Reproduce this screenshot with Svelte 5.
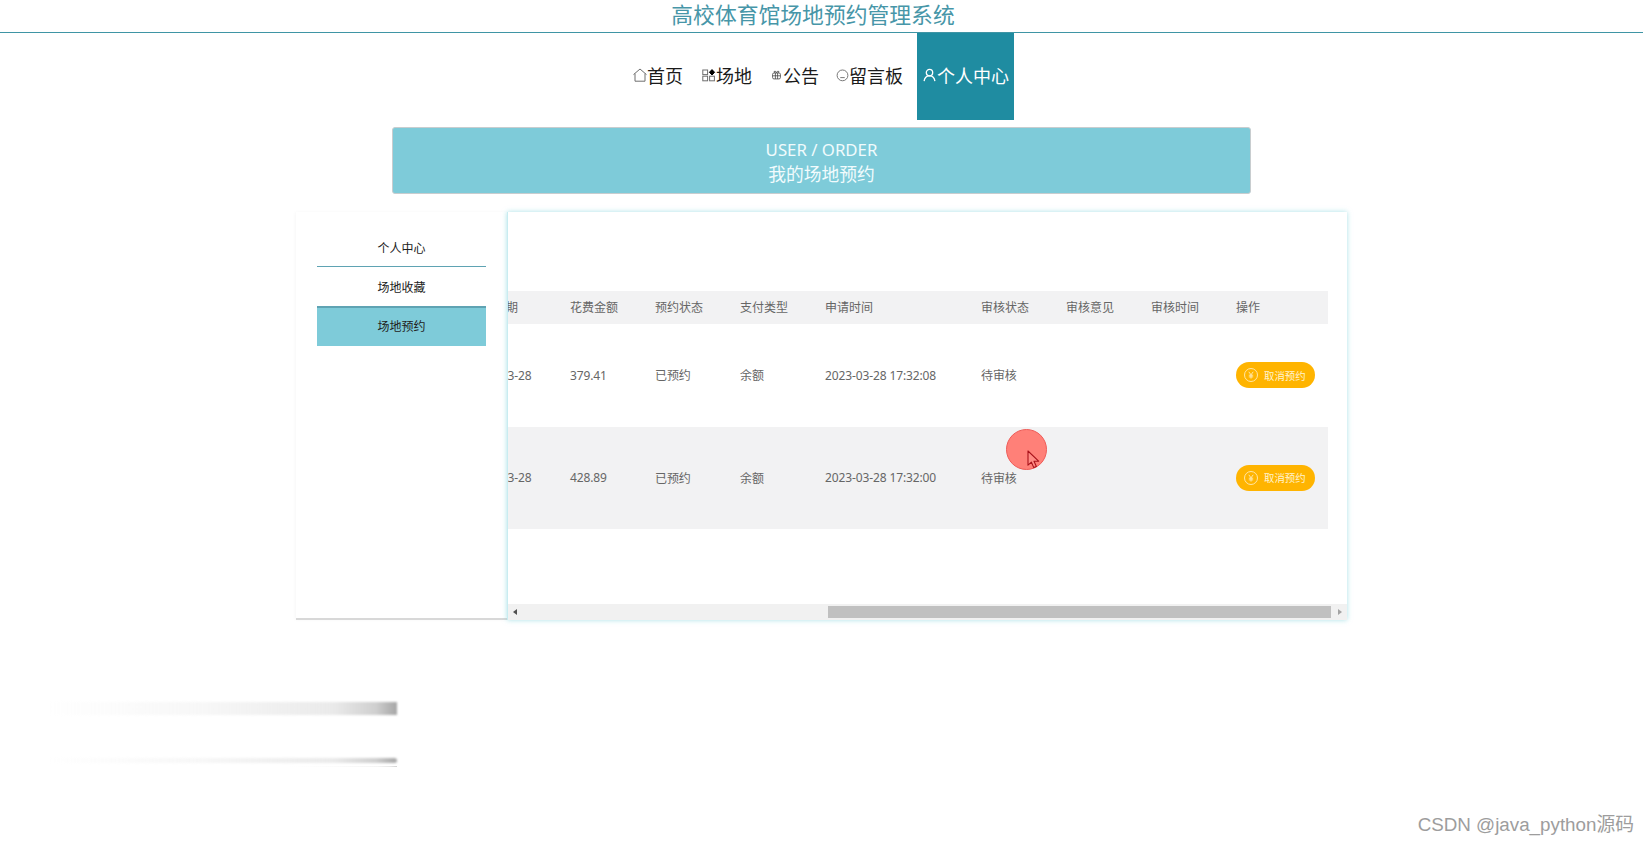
<script>
    const navItems = [
        { key: 'home', label: '首页' },
        { key: 'venue', label: '场地' },
        { key: 'notice', label: '公告' },
        { key: 'board', label: '留言板' },
        { key: 'user', label: '个人中心', active: true }
    ];

    const sideItems = [
        { label: '个人中心' },
        { label: '场地收藏' },
        { label: '场地预约', active: true }
    ];

    const columns = ['预约日期', '花费金额', '预约状态', '支付类型', '申请时间', '审核状态', '审核意见', '审核时间', '操作'];

    const rows = [
        { date: '2023-03-28', cost: '379.41', state: '已预约', pay: '余额', time: '2023-03-28 17:32:08', audit: '待审核' },
        { date: '2023-03-28', cost: '428.89', state: '已预约', pay: '余额', time: '2023-03-28 17:32:00', audit: '待审核' }
    ];
</script>

<div class="page">
    <header class="title">高校体育馆场地预约管理系统</header>

    <nav class="nav">
        {#each navItems as item}
            <a class="nav-item {item.key}" class:active={item.active} href="#top">
                <svg class="nav-icon" viewBox="0 0 14 14" fill="none" stroke="currentColor" stroke-width="1">
                    {#if item.key === 'home'}
                        <path d="M.5 6.6 7 1l6.5 5.6M2 5.6v7.6h10V5.6" />
                    {:else if item.key === 'venue'}
                        <rect x=".8" y="2" width="4.8" height="4.6" />
                        <rect x=".8" y="8.2" width="4.8" height="4.6" />
                        <rect x="7.6" y="8.2" width="4.8" height="4.6" />
                        <path class="solid" d="M10 1.6 12.6 4.3 10 7 7.4 4.3z" />
                    {:else if item.key === 'notice'}
                        <rect x="2" y="4.4" width="10" height="7.6" rx="1.8" />
                        <path d="M2 8h10M5.6 4.4v7.6M8.4 4.4v7.6M4.6 4.2 4 2.4h2l1 1.8 1-1.8h2l-.6 1.8" />
                    {:else if item.key === 'board'}
                        <circle cx="7" cy="7.4" r="5.8" />
                        <path d="M4.6 9.8h4.8" />
                    {:else}
                        <circle cx="7" cy="4.6" r="3.2" />
                        <path d="M1.6 13.2c.4-3.2 2.4-5.4 5.4-5.4s5 2.2 5.4 5.4" />
                    {/if}
                </svg>
                <span>{item.label}</span>
            </a>
        {/each}
    </nav>

    <section class="banner">
        <div class="banner-en">USER / ORDER</div>
        <div class="banner-cn">我的场地预约</div>
    </section>

    <main class="body">
        <aside class="side">
            {#each sideItems as item}
                <a class="side-item" class:active={item.active} href="#top">{item.label}</a>
            {/each}
        </aside>

        <section class="panel">
            <div class="scroller">
                <table>
                    <colgroup>
                        <col class="c-date" />
                        <col class="c-std" />
                        <col class="c-std" />
                        <col class="c-std" />
                        <col class="c-time" />
                        <col class="c-std" />
                        <col class="c-std" />
                        <col class="c-std" />
                        <col class="c-act" />
                    </colgroup>
                    <thead>
                        <tr>
                            {#each columns as col}
                                <th>{col}</th>
                            {/each}
                        </tr>
                    </thead>
                    <tbody>
                        {#each rows as row}
                            <tr>
                                <td>{row.date}</td>
                                <td>{row.cost}</td>
                                <td>{row.state}</td>
                                <td>{row.pay}</td>
                                <td>{row.time}</td>
                                <td>{row.audit}</td>
                                <td></td>
                                <td></td>
                                <td>
                                    <button class="cancel" type="button">
                                        <svg viewBox="0 0 14 14" fill="none" stroke="currentColor" stroke-width=".8">
                                            <circle cx="7" cy="7" r="6.5" />
                                            <path d="M4.8 3.8 7 6.8l2.2-3M7 6.8v3.8M4.8 7.2h4.4M4.8 8.9h4.4" />
                                        </svg>
                                        <span>取消预约</span>
                                    </button>
                                </td>
                            </tr>
                        {/each}
                    </tbody>
                </table>
            </div>

            <div class="scrollbar">
                <span class="arrow left"></span>
                <div class="track"><div class="thumb"></div></div>
                <span class="arrow right"></span>
            </div>
        </section>
    </main>

    <div class="streaks">
        <div class="streak one"></div>
        <div class="streak two"></div>
        <div class="streak three"></div>
    </div>
</div>

<div class="pointer">
    <svg viewBox="0 0 14 19" width="14" height="19">
        <path d="M1 1v14.2l3.4-3 2.4 5.4 2.6-1.2-2.4-5.2h4.6z" fill="#ff8b84" stroke="#a8121a" stroke-width="1.1" stroke-linejoin="round" />
    </svg>
</div>

<div class="watermark">CSDN @java_python源码</div>

<style>
    :global(body) {
        background: #fff;
        overflow: hidden;
    }

    .page {
        width: 1643px;
        height: 844px;
        font-family: "Noto Sans", "Noto Sans CJK SC", sans-serif;
    }

    .title {
        height: 32px;
        padding-right: 17px;
        border-bottom: 1px solid #3f95a5;
        font-size: 21.8px;
        line-height: 30px;
        text-align: center;
        color: #4796a8;
    }

    .nav {
        height: 87px;
        padding-right: 1px;
        display: flex;
        justify-content: center;
        gap: 10px;
    }

    .nav-item {
        padding: 0 4px 4px 5px;
        display: flex;
        align-items: center;
        font-size: 18px;
        color: #1a1a1a;
        text-decoration: none;
    }

    .nav-item.notice .nav-icon {
        width: 11px;
        margin-right: 1px;
        color: #444;
    }

    .nav-item.board {
        margin-left: -2px;
    }

    .nav-item.board .nav-icon {
        width: 13px;
    }

    .nav-item.active {
        padding-right: 5px;
        background: #1f8ca1;
        color: #fff;
    }

    .nav-icon {
        width: 14px;
        height: 14px;
        flex: none;
        color: #6e6e6e;
    }

    .nav-item.active .nav-icon {
        width: 15px;
        color: #fff;
        stroke-width: 1.3;
    }

    .solid {
        fill: #000;
        stroke: #000;
    }

    .banner {
        width: 859px;
        height: 67px;
        margin: 7px auto 0;
        box-sizing: border-box;
        padding-top: 10px;
        border: 1px solid #c8cdcf;
        border-radius: 3px;
        background: #7ecbd9;
        color: #f1fbfd;
        text-align: center;
        font-size: 16.8px;
        line-height: 24px;
    }

    .banner-cn {
        font-size: 17.8px;
    }

    .body {
        width: 1051px;
        height: 408px;
        margin: 18px auto 0;
        display: flex;
    }

    .side {
        width: 211px;
        flex: none;
        box-sizing: border-box;
        padding: 8px 21px 0;
        background: #fff;
        border-bottom: 2px solid #d8d8d8;
        box-shadow: -1px 0 3px rgba(0, 0, 0, 0.03);
    }

    .side-item {
        display: block;
        height: 38px;
        line-height: 40px;
        margin-bottom: 1px;
        border-bottom: 1px solid #5fa3b3;
        font-size: 12px;
        text-align: center;
        color: #222;
        text-decoration: none;
    }

    .side-item:first-child {
        padding-top: 8px;
        line-height: 41px;
    }

    .side-item.active {
        height: 38px;
        line-height: 38px;
        border-top: 1px solid #5fa3b3;
        border-bottom: 0;
        margin-top: -1px;
        background: #7ecbd9;
    }

    .panel {
        flex: 1;
        min-width: 0;
        display: flex;
        flex-direction: column;
        box-sizing: border-box;
        border-left: 1px solid #c8ecf1;
        box-shadow: 0 0 5px rgba(110, 205, 215, 0.6);
        background: #fff;
    }

    .scroller {
        flex: 1;
        overflow: hidden;
        padding-top: 79px;
    }

    table {
        width: 858px;
        margin-left: -38px;
        border-collapse: collapse;
        table-layout: fixed;
        font-size: 12px;
        color: #666;
    }

    .c-date { width: 100px; }
    .c-std { width: 85px; }
    .c-time { width: 156px; }
    .c-act { width: 92px; }

    th {
        height: 31px;
        padding: 0 0 2px;
        background: #f2f2f3;
        font-weight: 400;
        text-align: left;
    }

    td {
        height: 102.5px;
        padding: 0;
        letter-spacing: -0.12px;
    }

    tbody tr:nth-child(even) td {
        background: #f2f2f3;
    }

    .cancel {
        width: 79px;
        height: 26px;
        padding: 0 0 0 8px;
        display: flex;
        align-items: center;
        gap: 6px;
        border: 0;
        border-radius: 13px;
        background: #ffb400;
        color: #fff3cf;
        font: inherit;
        font-size: 10.4px;
    }

    .cancel svg {
        width: 14px;
        height: 14px;
        flex: none;
    }

    .cancel span {
        white-space: nowrap;
    }

    .scrollbar {
        height: 16px;
        flex: none;
        display: flex;
        background: #f1f1f1;
    }

    .arrow {
        width: 16px;
        flex: none;
        position: relative;
    }

    .arrow::after {
        content: "";
        position: absolute;
        top: 5px;
        border: 3px solid transparent;
    }

    .arrow.left::after {
        left: 2px;
        border-right: 4px solid #505050;
    }

    .arrow.right::after {
        left: 7px;
        border-left: 4px solid #a3a3a3;
    }

    .track {
        flex: 1;
        display: flex;
        justify-content: flex-end;
        align-items: center;
    }

    .thumb {
        width: 503px;
        height: 12px;
        background: #c0c0c0;
    }

    .streaks {
        margin: 82px 0 0 47px;
        width: 350px;
    }

    .streak {
        background: linear-gradient(90deg, rgba(255, 255, 255, 0), rgba(245, 245, 245, 0.8) 45%, #eaeaea 82%, #cfcfcf 94%, #a6a6a6 100%);
    }

    .streak.one {
        height: 13px;
        filter: blur(1px);
    }

    .streak.two {
        height: 5px;
        margin-top: 43px;
        border-radius: 0 4px 4px 0;
        filter: blur(1px);
    }

    .streak.three {
        width: 110px;
        height: 1px;
        margin: 3px 0 0 240px;
        opacity: 0.5;
    }

    .pointer {
        position: absolute;
        left: 1005.5px;
        top: 429px;
        width: 41px;
        height: 41px;
        box-sizing: border-box;
        padding: 20px 0 0 20px;
        border-radius: 50%;
        border: 1px solid #ee5c58;
        background: #ff8078;
    }

    .pointer svg {
        display: block;
    }

    .watermark {
        position: absolute;
        right: 14px;
        bottom: 8px;
        font-family: "Liberation Sans", "Noto Sans CJK SC", sans-serif;
        font-size: 18.8px;
        color: #9d9d9d;
        white-space: nowrap;
    }
</style>
